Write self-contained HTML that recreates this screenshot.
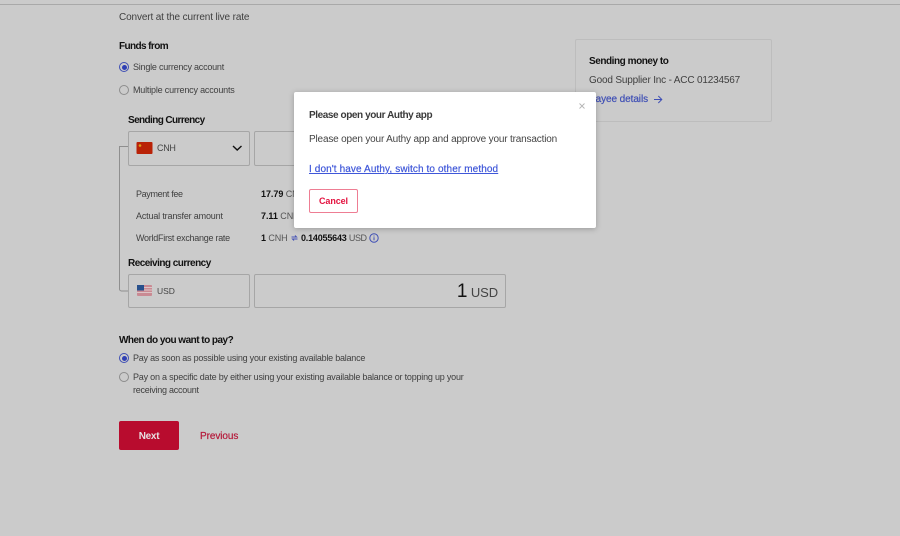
<!DOCTYPE html>
<html>
<head>
<meta charset="utf-8">
<style>
html,body{margin:0;padding:0}
body{width:900px;height:536px;background:#cbcbcb;position:relative;overflow:hidden;font-family:"Liberation Sans",sans-serif;color:#3f3f3f}
.t{position:absolute;white-space:nowrap;line-height:14px}
.b{font-weight:700;color:#111}
.s{font-size:9px}
.box{position:absolute;box-sizing:border-box;border:1px solid #a6a6a6;border-radius:2px}
.r{position:absolute;box-sizing:border-box;width:10px;height:10px;border-radius:50%;border:1px solid #8d8d8d}
.r.on{border-color:#3f4fb5}
.r.on:after{content:"";position:absolute;left:1.5px;top:1.5px;width:5px;height:5px;border-radius:50%;background:#2f3fb4}
svg{position:absolute;overflow:visible}
</style>
</head>
<body>
<div style="position:absolute;left:0;top:4px;width:900px;height:1px;background:#a9a9a9"></div>
<div class="t" style="left:119px;top:11px;font-size:10px;letter-spacing:-.13px">Convert at the current live rate</div>

<div class="t b" style="left:119px;top:40px;font-size:10px;letter-spacing:-.6px">Funds from</div>
<div class="r on" style="left:119px;top:62px"></div>
<div class="t s" style="left:133px;top:60px;letter-spacing:-.22px">Single currency account</div>
<div class="r" style="left:119px;top:85px"></div>
<div class="t s" style="left:133px;top:83px;letter-spacing:-.19px">Multiple currency accounts</div>

<div class="t b" style="left:128px;top:114px;font-size:10px;letter-spacing:-.6px">Sending Currency</div>
<div class="box" style="left:128px;top:131px;width:122px;height:35px;border-width:1.3px"></div>
<div class="box" style="left:254px;top:131px;width:252px;height:35px;border-width:1.3px"></div>
<svg style="left:136px;top:142px" width="21" height="13" viewBox="0 0 21 13"><rect x=".5" width="16" height="12" rx="1" fill="#b92207"/><circle cx="4" cy="3.5" r="1.3" fill="#d9a11a"/></svg>
<div class="t s" style="left:157px;top:141px;color:#444;letter-spacing:-.3px">CNH</div>
<svg style="left:232px;top:145px" width="11" height="7" viewBox="0 0 11 7"><path d="M1 1l4.2 4L9.5 1" fill="none" stroke="#111" stroke-width="1.4"/></svg>

<svg style="left:118px;top:146px" width="12" height="148" viewBox="0 0 12 148"><path d="M10 .5H1.5V143a2 2 0 0 0 2 2H10" fill="none" stroke="#8f8f8f" stroke-width="1"/></svg>

<div class="t s" style="left:136px;top:187px;letter-spacing:-.35px">Payment fee</div>
<div class="t s b" style="left:261px;top:187px;letter-spacing:-.05px">17.79 <span style="font-weight:400;color:#555">CNH</span></div>
<div class="t s" style="left:136px;top:209px;letter-spacing:-.17px">Actual transfer amount</div>
<div class="t s b" style="left:261px;top:209px;letter-spacing:-.05px">7.11 <span style="font-weight:400;color:#555">CNH</span></div>
<div class="t s" style="left:136px;top:231px;letter-spacing:-.27px">WorldFirst exchange rate</div>
<div class="t s b" style="left:261px;top:231px;letter-spacing:-.1px">1 <span style="font-weight:400;color:#555">CNH</span></div>
<svg style="left:291px;top:235px" width="7" height="6" viewBox="0 0 7 6"><path d="M.5 2h5L4 .5M6.500 4h-5L3 5.500" fill="none" stroke="#4552b5" stroke-width="1"/></svg>
<div class="t s b" style="left:301px;top:231px;letter-spacing:-.2px">0.14055643 <span style="font-weight:400;color:#555;letter-spacing:-.4px">USD</span></div>
<svg style="left:369px;top:233px" width="10" height="10" viewBox="0 0 10 10"><circle cx="5" cy="5" r="4.200" fill="none" stroke="#3f4fb5" stroke-width="1"/><path d="M5 4.300v3M5 2.500v1" stroke="#3f4fb5" stroke-width="1"/></svg>

<div class="t b" style="left:128px;top:257px;font-size:10px;letter-spacing:-.53px">Receiving currency</div>
<div class="box" style="left:128px;top:274px;width:122px;height:34px"></div>
<div class="box" style="left:254px;top:274px;width:252px;height:34px;border-width:1.3px"></div>
<svg style="left:137px;top:285px" width="15" height="12" viewBox="0 0 15 12"><rect width="15" height="11" rx="1" fill="#c98a93"/><path d="M0 2.500h15M0 5h15M0 7.500h15" stroke="#dcc4c6" stroke-width="1"/><rect width="7" height="5.500" fill="#28508c"/></svg>
<div class="t" style="left:157px;top:284px;font-size:8.500px;color:#444">USD</div>
<div class="t" style="right:402px;top:282px;font-size:13px;line-height:20px;color:#444;letter-spacing:-.1px"><span style="font-size:19px;color:#111">1</span> USD</div>

<div class="t b" style="left:119px;top:334px;font-size:10px;letter-spacing:-.52px">When do you want to pay?</div>
<div class="r on" style="left:119px;top:353px"></div>
<div class="t s" style="left:133px;top:351px;letter-spacing:-.23px">Pay as soon as possible using your existing available balance</div>
<div class="r" style="left:119px;top:372px"></div>
<div class="t s" style="left:133px;top:370px;letter-spacing:-.21px">Pay on a specific date by either using your existing available balance or topping up your</div>
<div class="t s" style="left:133px;top:383px;letter-spacing:-.25px">receiving account</div>

<div style="position:absolute;left:119px;top:421px;width:60px;height:29px;background:#b80c2e;border-radius:2px"></div>
<div class="t" style="left:119px;top:430px;width:60px;text-align:center;font-size:10px;font-weight:700;color:#e6dfe1;letter-spacing:-.3px">Next</div>
<div class="t" style="left:200px;top:430px;font-size:10px;color:#b5193a;letter-spacing:-.08px;-webkit-text-stroke:.2px #b5193a">Previous</div>

<div class="box" style="left:575px;top:39px;width:197px;height:83px;border-color:#bdbdbd"></div>
<div class="t b" style="left:589px;top:55px;font-size:10px;letter-spacing:-.45px">Sending money to</div>
<div class="t" style="left:589px;top:74px;font-size:10px;letter-spacing:-.18px">Good Supplier Inc - ACC 01234567</div>
<div class="t" style="left:589px;top:93px;font-size:10px;color:#3f4fb5;letter-spacing:-.08px;-webkit-text-stroke:.2px #3f4fb5">Payee details</div>
<svg style="left:653px;top:95px" width="10" height="10" viewBox="0 0 10 10"><path d="M1 4.500h7.500M5.300 1L8.800 4.500 5.300 8" fill="none" stroke="#3f4fb5" stroke-width="1"/></svg>

<div style="position:absolute;left:294px;top:92px;width:302px;height:136px;background:#fff;border-radius:2px;box-shadow:0 1px 6px rgba(0,0,0,.25)"></div>
<svg style="left:579px;top:103px" width="6" height="6" viewBox="0 0 6 6"><path d="M.5.500l5 5M5.500.500l-5 5" stroke="#b5b5b5" stroke-width=".9"/></svg>
<div class="t" style="left:309px;top:109px;font-size:10px;font-weight:700;color:#3a3a3a;letter-spacing:-.42px">Please open your Authy app</div>
<div class="t" style="left:309px;top:133px;font-size:10px;color:#444;letter-spacing:-.17px">Please open your Authy app and approve your transaction</div>
<div class="t" style="left:309px;top:163px;font-size:10px;color:#3f57d9;text-decoration:underline;letter-spacing:.11px;-webkit-text-stroke:.2px #3f57d9">I don't have Authy, switch to other method</div>
<div style="position:absolute;box-sizing:border-box;left:309px;top:189px;width:49px;height:24px;border:1.300px solid #ee7d93;border-radius:2px"></div>
<div class="t" style="left:309px;top:194px;width:49px;text-align:center;font-size:9px;font-weight:700;color:#e4123f;letter-spacing:-.1px">Cancel</div>
</body>
</html>
